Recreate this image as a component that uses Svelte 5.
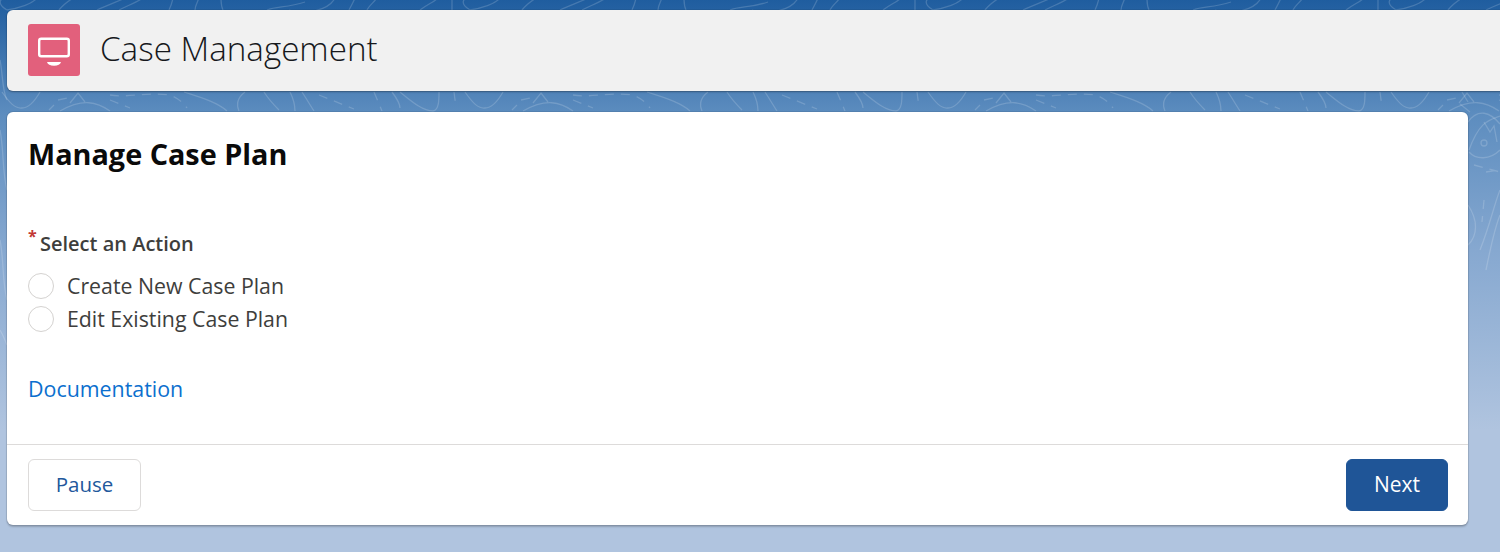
<script>
  /* one repeat of the contour artwork, 463px wide, starting at x = 0 */
  const bandLines = [
    'M0 92C10 100 22 111 33 111C39 110 39 100 39 92',
    'M65 92C72 102 78 109 85 108C93 108 99 99 103 92',
    'M133 103L141 93L148 102',
    'M123 111C146 98 160 102 173 111',
    'M247 92C262 97 280 102 290 111',
    'M302 111C299 104 300 98 308 92',
    'M327 92C332 100 337 105 342 110',
    'M353 92C356 98 358 104 358 111',
    'M365 92C369 98 373 105 377 111',
    'M455 92C461 100 463 106 463 108'
  ];
  const bandDashes = [
    'M54 92L56 107',
    'M112 110L117 105',
    'M121 100L130 98',
    'M173 95C190 98 210 92 233 95C240 98 246 102 250 108',
    'M173 100L193 108',
    'M382 95L417 109',
    'M437 92L445 111'
  ];
  const topLines = [
    'M20 10C28 4 34 2 38 -2',
    'M52 10C52 6 52 3 52 -1',
    'M70 10C60 4 62 -2 70 -2M70 10C82 8 95 4 100 -2',
    'M122 10C125 6 130 2 136 -2',
    'M160 10C170 5 180 2 188 -2',
    'M182 10C192 5 200 2 206 -2',
    'M232 10C234 6 235 3 236 -2',
    'M258 10C258 6 260 3 262 -2',
    'M286 10C284 6 284 3 284 -2',
    'M330 10C340 6 350 8 368 2',
    'M352 10C368 16 392 10 398 -2',
    'M412 10C414 6 416 3 418 -2',
    'M430 10C432 6 436 3 440 -2'
  ];
  const tiles = [-463, 0, 463, 926, 1389].map((n) => n - 63);
</script>

<div class="page">
  <svg class="pattern" viewBox="0 0 1500 552" aria-hidden="true">
    {#each tiles as x}
      <g transform="translate({x + 463} 0)">
        {#each bandLines as d}<path {d} />{/each}
        {#each topLines as d}<path {d} />{/each}
        {#each bandDashes as d}<path {d} class="dash" />{/each}
      </g>
    {/each}
    <path d="M1468 122C1478 108 1490 112 1500 124" />
    <path d="M1470 112L1460 104M1468 102L1462 92" />
    <path d="M1469 150C1480 120 1490 120 1500 116" />
    <path d="M1469 152C1476 160 1490 160 1500 150" />
    <circle cx="1484" cy="143" r="3" />
    <path d="M1484 122L1490 132L1494 126L1497 142" />
    <path class="dash" d="M1474 165L1500 172M1486 172L1500 170M1484 200L1482 222" />
    <path d="M1468 205C1478 220 1478 235 1468 245" />
    <path d="M1480 250C1490 225 1494 205 1500 190M1486 270C1492 240 1496 225 1500 215" />
    <path d="M0 130C4 150 2 170 7 190M0 240C4 260 2 280 7 300M0 60C3 75 2 90 7 100" />
    <path d="M0 330C3 335 5 340 7 345" />
  </svg>

  <header class="header">
    <span class="app-icon">
      <svg viewBox="0 0 52 52" width="52" height="52" aria-hidden="true">
        <rect x="11.200" y="14.700" width="29.600" height="17.600" rx="2" fill="none" stroke="#fff" stroke-width="2.400" />
        <path d="M19 38h14c-.8 2.600-3 3.800-7 3.800s-6.200-1.200-7-3.800z" fill="#fff" />
      </svg>
    </span>
    <h1>Case Management</h1>
  </header>

  <main class="card">
    <div class="body">
      <h2>Manage Case Plan</h2>
      <div class="label"><span class="req">*</span>Select an Action</div>
      <label class="option"><span class="radio"></span>Create New Case Plan</label>
      <label class="option"><span class="radio"></span>Edit Existing Case Plan</label>
      <a class="doc" href="#doc">Documentation</a>
    </div>
    <footer class="footer">
      <button class="btn pause">Pause</button>
      <button class="btn next">Next</button>
    </footer>
  </main>
</div>

<style>
  :global(body) { margin: 0; overflow: hidden; }
  .page {
    position: relative;
    width: 1500px;
    height: 552px;
    box-sizing: border-box;
    padding: 10px 0 0 7px;
    overflow: hidden;
    font-family: "Open Sans", "Noto Sans", sans-serif;
    background: linear-gradient(180deg, #1f5d9f 0, #5d8dbf 115px, #86a8d0 250px, #b0c4df 430px, #b0c4df 100%);
  }
  .pattern {
    position: absolute;
    inset: 0;
    width: 1500px;
    height: 552px;
    fill: none;
    stroke: rgba(255, 255, 255, 0.17);
    stroke-width: 1.300;
  }
  .dash { stroke-dasharray: 9 7; }
  .header {
    position: relative;
    display: flex;
    align-items: center;
    gap: 20px;
    height: 81px;
    box-sizing: border-box;
    padding-left: 21px;
    margin-right: -10px;
    background: #f1f1f1;
    border-radius: 6px 0 0 6px;
    box-shadow: 0 0 0 1px rgba(0, 0, 0, 0.05), 0 1px 2px rgba(0, 0, 0, 0.3);
  }
  .app-icon {
    width: 52px;
    height: 52px;
    display: block;
    margin-top: -1px;
    background: #e2607c;
    border-radius: 3px;
  }
  .app-icon svg { display: block; }
  h1 {
    margin: 0 0 4px;
    font-size: 33.200px;
    font-weight: 300;
    color: #16181c;
    line-height: 40px;
  }
  .card {
    position: relative;
    width: 1461px;
    height: 413px;
    margin-top: 21px;
    display: flex;
    flex-direction: column;
    background: #fff;
    border-radius: 6px;
    box-shadow: 0 0 0 1px rgba(0, 0, 0, 0.08), 0 2px 2px rgba(0, 0, 0, 0.2);
  }
  .body {
    height: 333px;
    box-sizing: border-box;
    padding: 22px 21px 0;
    border-bottom: 1px solid #dddbda;
  }
  h2 {
    margin: 0;
    font-size: 28.800px;
    font-weight: 700;
    line-height: 40px;
    color: #0a0a0a;
  }
  .label {
    margin-top: 57px;
    height: 26px;
    font-size: 20px;
    font-weight: 600;
    line-height: 26px;
    color: #3e3e3c;
    display: flex;
  }
  .req {
    color: #c23934;
    font-size: 16px;
    font-weight: 700;
    line-height: 16px;
    width: 12px;
    margin-top: -3px;
  }
  .option {
    display: flex;
    align-items: center;
    gap: 13px;
    height: 33px;
    font-size: 21.300px;
    color: #3e3e3c;
  }
  .label + .option { margin-top: 12px; }
  .radio {
    width: 24px;
    height: 24px;
    border: 1px solid #d4d2d0;
    border-radius: 50%;
    background: #fff;
  }
  .doc {
    display: block;
    margin-top: 38px;
    font-size: 21.400px;
    line-height: 32px;
    color: #0b6fce;
    text-decoration: none;
  }
  .footer {
    display: flex;
    justify-content: space-between;
    padding: 14px 20px 0 21px;
  }
  .btn {
    height: 52px;
    box-sizing: border-box;
    padding-bottom: 3px;
    border-radius: 6px;
    font: 400 20.500px "Open Sans", "Noto Sans", sans-serif;
  }
  .pause {
    width: 113px;
    background: #fff;
    border: 1px solid #dddbda;
    color: #22589c;
  }
  .next {
    width: 102px;
    background: #1f5597;
    border: 1px solid #1f5597;
    color: #fff;
    font-size: 21px;
  }
</style>
